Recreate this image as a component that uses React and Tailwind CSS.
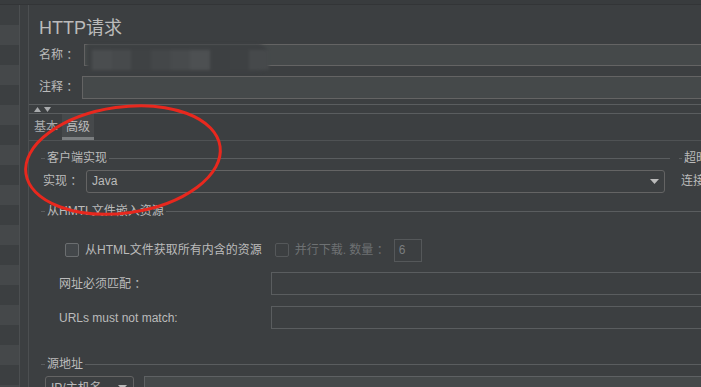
const FONT = { fontFamily: '"Liberation Sans", "Noto Sans CJK SC", sans-serif' }

function Caret({ className = '' }) {
  return (
    <svg width="9" height="5" viewBox="0 0 9 5" className={className}>
      <path d="M0 0h9L4.5 5z" fill="#bbbbbb" />
    </svg>
  )
}

function GroupTitle({ title, lineEnd = true }) {
  return (
    <div className="flex items-center h-[16px]">
      <div className="w-[4px] h-px bg-[#5a5d5f]" />
      <span className="px-[2px] text-[12px] leading-[16px] text-[#bbbbbb]">{title}</span>
      {lineEnd && <div className="flex-1 h-px bg-[#5a5d5f]" />}
    </div>
  )
}

function Checkbox({ dim }) {
  return (
    <div className={`w-[14px] h-[14px] shrink-0 rounded-[2px] border ${dim ? 'border-[#55585a] bg-[#3c3f41]' : 'border-[#6b6e70] bg-[#43474a]'}`} />
  )
}

function TreeStrip() {
  const rows = Array.from({ length: 19 }, (_, i) => i)
  return (
    <div className="w-[19px] shrink-0">
      <div className="h-[20px] bg-[#3c3f41]" />
      {rows.map(i => (
        <div key={i} className={`h-[20px] ${i % 2 === 0 ? 'bg-[#45484a]' : 'bg-[#3c3f41]'}`} />
      ))}
    </div>
  )
}

function Smudge() {
  const blocks = ['#4a4d4f', '#474a4c', '#3f4244', '#444749', '#484b4d', '#4d5052', '#3d4042', '#3e4143', '#46494b']
  return (
    <div className="absolute left-[2px] top-[-1px] w-[182px] h-[28px] rounded-r-[12px] bg-[#3d4042] blur-[1.5px] flex items-end pb-[2px] pl-[5px]">
      {blocks.map((c, i) => (
        <div key={i} className="w-[20px] h-[20px]" style={{ background: c }} />
      ))}
    </div>
  )
}

export default function App() {
  return (
    <div className="relative w-[701px] h-[387px] overflow-hidden bg-[#3c3f41] text-[#bbbbbb]" style={FONT}>
      <div className="h-[5px] bg-[#393c3e] border-b border-[#333537]" />
      <div className="flex h-[382px] overflow-hidden">
        <TreeStrip />
        <div className="w-[10px] shrink-0 border-l border-r border-[#4c4f51]" />
        <div className="flex-1 min-w-0">
          {/* title */}
          <div className="h-[39px] pl-[10px] pt-[13px]">
            <h1 className="text-[18px] leading-[20px] text-[#bbbbbb]">HTTP请求</h1>
          </div>
          {/* name */}
          <div className="flex items-center h-[22px]">
            <span className="w-[55px] shrink-0 pl-[10px] text-[12px]">名称 ：</span>
            <div className="relative flex-1 h-[22px] bg-[#45494a] border border-r-0 border-[#646464]">
              <Smudge />
            </div>
          </div>
          {/* comment */}
          <div className="flex items-center h-[22px] mt-[10px]">
            <span className="w-[53px] shrink-0 pl-[10px] text-[12px]">注释 ：</span>
            <div className="flex-1 h-[23px] bg-[#45494a] border border-r-0 border-[#646464]" />
          </div>
          {/* splitter arrows */}
          <div className="mt-[6px] h-[10px] border-t border-b border-[#5a5d5f] flex items-center gap-[3px] pl-[5px]">
            <svg width="7" height="5" viewBox="0 0 7 5"><path d="M0 5h7L3.5 0z" fill="#a9abad" /></svg>
            <svg width="7" height="5" viewBox="0 0 7 5"><path d="M0 0h7L3.5 5z" fill="#a9abad" /></svg>
          </div>
          {/* tabs */}
          <div className="h-[27px] border-b border-[#4f5254] flex items-stretch pl-[5px] text-[12px]">
            <div className="flex items-center pr-[4px] text-[#a9abad]">基本</div>
            <div className="flex items-center px-[4px] bg-[#46494b] border-b-[3px] border-[#7b7e80] pt-[2px]">高级</div>
          </div>
          {/* content */}
          <div className="pl-[12px]">
            <div className="flex mt-[9px]">
              <div className="w-[629px] shrink-0">
                <GroupTitle title="客户端实现" />
                <div className="flex items-center mt-[4px] h-[22px]">
                  <span className="w-[45px] shrink-0 pl-[2px] text-[12px]">实现 ：</span>
                  <div className="w-[579px] h-[23px] rounded-[3px] border border-[#646464] flex items-center justify-between pl-[5px] pr-[5px]">
                    <span className="text-[12px]">Java</span>
                    <Caret />
                  </div>
                </div>
              </div>
              <div className="ml-[9px] flex flex-col">
                <div className="flex items-center h-[16px]">
                  <div className="w-[3px] h-px bg-[#5a5d5f]" />
                  <span className="pl-[2px] text-[12px] whitespace-nowrap">超时</span>
                </div>
                <div className="flex items-center h-[22px] mt-[4px] pl-[2px] text-[12px] whitespace-nowrap">连接</div>
              </div>
            </div>

            <div className="mt-[11px]">
              <GroupTitle title="从HMTL文件嵌入资源" />
            </div>
            <div className="flex items-center h-[22px] mt-[20px] pl-[24px] text-[12px]">
              <Checkbox />
              <span className="ml-[6px]">从HTML文件获取所有内含的资源</span>
              <div className="ml-[13px]"><Checkbox dim /></div>
              <span className="ml-[6px] text-[#6e7173]">并行下载. 数量 ：</span>
              <div className="ml-[5px] w-[28px] h-[23px] border border-[#55585a] flex items-center pl-[4px] text-[#7a7d7f]">6</div>
            </div>
            <div className="flex items-center h-[23px] mt-[11px] pl-[18px] text-[12px]">
              <span className="w-[212px] shrink-0">网址必须匹配 ：</span>
              <div className="flex-1 h-[23px] border border-r-0 border-[#5a5d5f]" />
            </div>
            <div className="flex items-center h-[23px] mt-[11px] pl-[18px] text-[12px]">
              <span className="w-[212px] shrink-0">URLs must not match:</span>
              <div className="flex-1 h-[23px] border border-r-0 border-[#5a5d5f]" />
            </div>

            <div className="mt-[27px]">
              <GroupTitle title="源地址" />
            </div>
            <div className="flex items-start mt-[4px] pl-[4px]">
              <div className="w-[89px] h-[23px] shrink-0 rounded-[3px] border border-[#646464] flex items-center justify-between pl-[5px] pr-[6px] text-[12px]">
                <span>IP/主机名</span>
                <Caret />
              </div>
              <div className="ml-[10px] flex-1 h-[23px] bg-[#45494a] border border-r-0 border-[#5e6163]" />
            </div>
          </div>
        </div>
      </div>

      {/* red annotation ellipse */}
      <svg className="absolute inset-0 pointer-events-none" width="701" height="387" viewBox="0 0 701 387">
        <ellipse cx="123" cy="160" rx="98" ry="53" transform="rotate(-8 123 160)" fill="none" stroke="#e8281e" strokeWidth="3" />
      </svg>
    </div>
  )
}
